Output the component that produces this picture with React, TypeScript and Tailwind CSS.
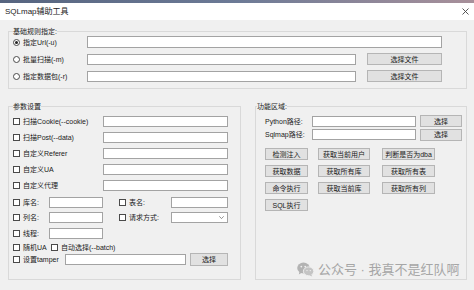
import React from "react";

const Cb = () => (
  <span className="block w-[7px] h-[7px] border border-[#4a4a4a] bg-white shrink-0" />
);

const Radio = ({ on }: { on?: boolean }) => (
  <span className="flex items-center justify-center w-[7px] h-[7px] rounded-full border border-[#4a4a4a] bg-white shrink-0">
    {on && <span className="block w-[3px] h-[3px] rounded-full bg-[#222222]" />}
  </span>
);

const Box = ({ w, h = 11 }: { w: string; h?: number }) => (
  <div className={`${w} ${h === 12 ? "h-[12px]" : "h-[11px]"} bg-white border border-[#a3a3a3] shrink-0`} />
);

const Btn = ({ w, children, h }: { w: string; children: React.ReactNode; h: string }) => (
  <div className={`${w} ${h} flex items-center justify-center bg-[#e1e1e1] border border-[#b5b5b5] text-[7px] leading-none shrink-0`}>
    {children}
  </div>
);

export default function App() {
  return (
    <div className="w-[474px] h-[290px] bg-[#f0f0f0] relative overflow-hidden text-[#1a1a1a] font-['Liberation_Sans','Noto_Sans_CJK_SC',sans-serif]">
      <div className="h-[3px] bg-gradient-to-r from-[#56647f] via-[#6c7a96] to-[#a8909a]" />
      <div className="h-[17px] bg-white flex items-center justify-between pl-[5px] pr-[4px]">
        <span className="text-[8px] leading-none text-[#222222]">SQLmap辅助工具</span>
        <svg width="7" height="7" viewBox="0 0 7 7" className="mr-[1px]">
          <path d="M0.5 0.5 L6.5 6.5 M6.5 0.5 L0.5 6.5" stroke="#444444" strokeWidth="0.9" />
        </svg>
      </div>

      <div className="pl-[8px] pr-[7px] pt-[6.5px]">
        {/* group 1 */}
        <fieldset className="border border-[#d9d9d9] pl-[4px] pb-[5px]">
          <legend className="text-[7px] leading-[9px]">基础规则指定:</legend>
          <div className="flex items-center h-[13px]">
            <Radio on />
            <span className="w-[67px] pl-[3px] text-[7px] leading-none whitespace-nowrap">指定Url(-u)</span>
            <Box w="w-[355px]" h={12} />
          </div>
          <div className="flex items-center h-[13px] mt-[4px]">
            <Radio />
            <span className="w-[67px] pl-[3px] text-[7px] leading-none whitespace-nowrap">批量扫描(-m)</span>
            <Box w="w-[269px]" />
            <div className="ml-[11px]">
              <Btn w="w-[75px]" h="h-[12px]">选择文件</Btn>
            </div>
          </div>
          <div className="flex items-center h-[13px] mt-[4px]">
            <Radio />
            <span className="w-[67px] pl-[3px] text-[7px] leading-none whitespace-nowrap">指定数据包(-r)</span>
            <Box w="w-[269px]" />
            <div className="ml-[11px]">
              <Btn w="w-[75px]" h="h-[12px]">选择文件</Btn>
            </div>
          </div>
        </fieldset>

        <div className="flex mt-[13px]">
          {/* group 2 */}
          <fieldset className="w-[233px] border border-[#d9d9d9] pl-[4px] pt-[2.5px] pb-[13px]">
            <legend className="text-[7px] leading-[9px]">参数设置</legend>
            {["扫描Cookie(--cookie)", "扫描Post(--data)", "自定义Referer", "自定义UA", "自定义代理"].map((t) => (
              <div key={t} className="flex items-center h-[16px]">
                <Cb />
                <span className="w-[83px] pl-[3px] text-[7px] leading-none whitespace-nowrap">{t}</span>
                <Box w="w-[125px]" />
              </div>
            ))}
            <div className="flex items-center h-[16px] mt-[1px]">
              <Cb />
              <span className="w-[29px] pl-[3px] text-[7px] leading-none">库名:</span>
              <Box w="w-[54px]" />
              <span className="ml-[16px]"><Cb /></span>
              <span className="w-[45px] pl-[3px] text-[7px] leading-none">表名:</span>
              <Box w="w-[57px]" />
            </div>
            <div className="flex items-center h-[15px]">
              <Cb />
              <span className="w-[29px] pl-[3px] text-[7px] leading-none">列名:</span>
              <Box w="w-[54px]" />
              <span className="ml-[16px]"><Cb /></span>
              <span className="w-[45px] pl-[3px] text-[7px] leading-none whitespace-nowrap">请求方式:</span>
              <div className="w-[57px] h-[11px] bg-white border border-[#a3a3a3] flex items-center justify-end pr-[3px]">
                <svg width="5" height="3" viewBox="0 0 5 3">
                  <path d="M0.3 0.3 L2.5 2.6 L4.7 0.3" fill="none" stroke="#666666" strokeWidth="0.7" />
                </svg>
              </div>
            </div>
            <div className="flex items-center h-[16px]">
              <Cb />
              <span className="w-[29px] pl-[3px] text-[7px] leading-none">线程:</span>
              <Box w="w-[54px]" />
            </div>
            <div className="flex items-center h-[12px]">
              <Cb />
              <span className="w-[31px] pl-[3px] text-[7px] leading-none whitespace-nowrap">随机UA</span>
              <Cb />
              <span className="pl-[3px] text-[7px] leading-none whitespace-nowrap">自动选择(--batch)</span>
            </div>
            <div className="flex items-center h-[13px]">
              <Cb />
              <span className="w-[45px] pl-[3px] text-[7px] leading-none whitespace-nowrap">设置tamper</span>
              <Box w="w-[121px]" />
              <div className="ml-[4px]">
                <Btn w="w-[38px]" h="h-[13px]">选择</Btn>
              </div>
            </div>
          </fieldset>

          {/* group 3 */}
          <fieldset className="ml-[14px] w-[212px] border border-[#d9d9d9] pl-[1px]">
            <legend className="text-[7px] leading-[9px]">功能区域:</legend>
            <div className="pl-[8px] pt-[4px]">
              <div className="flex items-center h-[13px]">
                <span className="w-[47px] text-[7px] leading-none whitespace-nowrap">Python路径:</span>
                <Box w="w-[104px]" />
                <div className="ml-[4px]">
                  <Btn w="w-[42px]" h="h-[12px]">选择</Btn>
                </div>
              </div>
              <div className="flex items-center h-[13px] mt-[0.5px]">
                <span className="w-[47px] text-[7px] leading-none whitespace-nowrap">Sqlmap路径:</span>
                <Box w="w-[104px]" />
                <div className="ml-[4px]">
                  <Btn w="w-[42px]" h="h-[12px]">选择</Btn>
                </div>
              </div>
              <div className="mt-[7px] flex flex-col gap-[5px]">
                {[
                  ["检测注入", "获取当前用户", "判断是否为dba"],
                  ["获取数据", "获取所有库", "获取所有表"],
                  ["命令执行", "获取当前库", "获取所有列"],
                ].map((r) => (
                  <div key={r[0]} className="flex">
                    <Btn w="w-[43px]" h="h-[12px]">{r[0]}</Btn>
                    <div className="ml-[10px]">
                      <Btn w="w-[52px]" h="h-[12px]">{r[1]}</Btn>
                    </div>
                    <div className="ml-[12px]">
                      <Btn w="w-[53px]" h="h-[12px]">{r[2]}</Btn>
                    </div>
                  </div>
                ))}
                <div className="flex">
                  <Btn w="w-[43px]" h="h-[12px]">SQL执行</Btn>
                </div>
              </div>
            </div>
          </fieldset>
        </div>
      </div>

      {/* watermark */}
      <div className="absolute left-[297px] top-[262px] flex items-center">
        <svg width="17" height="15" viewBox="0 0 17 15">
          <ellipse cx="6.5" cy="6" rx="6.3" ry="5.4" fill="#b3b3b3" />
          <path d="M2.5 9.5 L1.8 12.6 L5.2 10.6 Z" fill="#b3b3b3" />
          <ellipse cx="11.6" cy="9.3" rx="5.2" ry="4.4" fill="#c4c4c4" stroke="#f0f0f0" strokeWidth="0.9" />
          <path d="M14.2 12.3 L15.2 14.6 L12.2 13.3 Z" fill="#c4c4c4" />
          <circle cx="4.3" cy="4.6" r="0.9" fill="#f0f0f0" />
          <circle cx="8.2" cy="4.6" r="0.9" fill="#f0f0f0" />
          <circle cx="10" cy="8.6" r="0.7" fill="#f0f0f0" />
          <circle cx="13.3" cy="8.6" r="0.7" fill="#f0f0f0" />
        </svg>
        <span className="ml-[4px] text-[13px] leading-none text-[#a6a6a6] whitespace-nowrap">公众号 · 我真不是红队啊</span>
      </div>
    </div>
  );
}
